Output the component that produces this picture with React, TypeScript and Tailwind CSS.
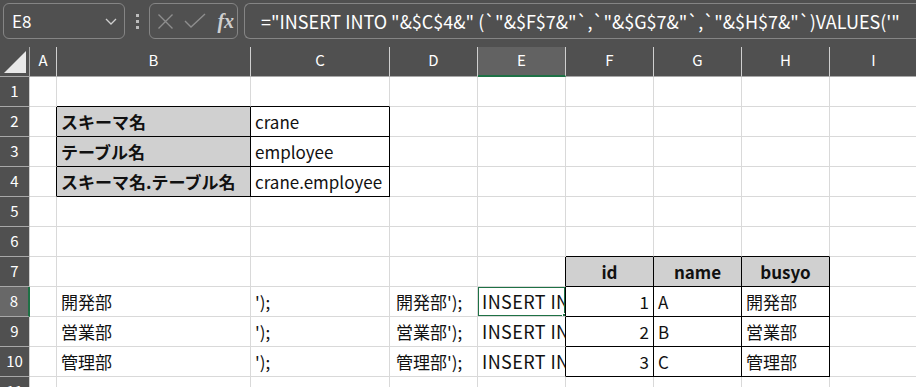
import { Fragment } from 'react';

type Cell = {
  text: string;
  bold?: boolean;
  fill?: boolean;
  align?: 'left' | 'center' | 'right';
};

const COLS = ['A', 'B', 'C', 'D', 'E', 'F', 'G', 'H', 'I'];
const ROWS = [1, 2, 3, 4, 5, 6, 7, 8, 9, 10, 11];

const cells: Record<string, Cell> = {
  B2: { text: 'スキーマ名', bold: true, fill: true },
  C2: { text: 'crane' },
  B3: { text: 'テーブル名', bold: true, fill: true },
  C3: { text: 'employee' },
  B4: { text: 'スキーマ名.テーブル名', bold: true, fill: true },
  C4: { text: 'crane.employee' },
  F7: { text: 'id', bold: true, fill: true, align: 'center' },
  G7: { text: 'name', bold: true, fill: true, align: 'center' },
  H7: { text: 'busyo', bold: true, fill: true, align: 'center' },
  B8: { text: '開発部' },
  C8: { text: "');" },
  D8: { text: "開発部');" },
  E8: { text: 'INSERT IN' },
  F8: { text: '1', align: 'right' },
  G8: { text: 'A' },
  H8: { text: '開発部' },
  B9: { text: '営業部' },
  C9: { text: "');" },
  D9: { text: "営業部');" },
  E9: { text: 'INSERT IN' },
  F9: { text: '2', align: 'right' },
  G9: { text: 'B' },
  H9: { text: '営業部' },
  B10: { text: '管理部' },
  C10: { text: "');" },
  D10: { text: "管理部');" },
  E10: { text: 'INSERT IN' },
  F10: { text: '3', align: 'right' },
  G10: { text: 'C' },
  H10: { text: '管理部' },
};

// borders drawn in black (right / bottom edge of the cell)
const rightBlack = new Set([
  'A2', 'A3', 'A4', 'B2', 'B3', 'B4', 'C2', 'C3', 'C4',
  'E7', 'E8', 'E9', 'E10', 'F7', 'F8', 'F9', 'F10', 'G7', 'G8', 'G9', 'G10', 'H7', 'H8', 'H9', 'H10',
]);
const bottomBlack = new Set([
  'B1', 'C1', 'B2', 'B3', 'B4', 'C2', 'C3', 'C4',
  'F6', 'G6', 'H6', 'F7', 'G7', 'H7', 'F8', 'G8', 'H8', 'F9', 'G9', 'H9', 'F10', 'G10', 'H10',
]);

const FORMULA = '="INSERT INTO "&$C$4&" (`"&$F$7&"`,`"&$G$7&"`,`"&$H$7&"`)VALUES(\'"';

const FormulaBar = () => (
  <div className="flex h-[47px] items-start bg-[#505050] pl-[3px] pt-[3px]">
    <div className="flex h-[36px] w-[127px] items-center justify-between rounded-[6px] border border-[#858585] pl-[8px] pr-[6px]">
      <span className="text-[17px] text-white">E8</span>
      <svg width="14" height="14" viewBox="0 0 14 14" fill="none" stroke="#cfcfcf" strokeWidth="1.3">
        <path d="M2 5l5 5 5-5" />
      </svg>
    </div>
    <div className="flex h-[36px] w-[25px] flex-col items-center justify-center gap-[3px]">
      <span className="h-[3px] w-[3px] bg-[#bdbdbd]" />
      <span className="h-[3px] w-[3px] bg-[#bdbdbd]" />
      <span className="h-[3px] w-[3px] bg-[#bdbdbd]" />
    </div>
    <div className="flex h-[36px] w-[92px] items-center rounded-[6px] border border-[#858585] pl-[7px]">
      <svg width="17" height="17" viewBox="0 0 17 17" fill="none" stroke="#8e8e8e" strokeWidth="1.4">
        <path d="M1.5 1.5l14 14M15.5 1.5l-14 14" />
      </svg>
      <svg className="ml-[10px]" width="22" height="18" viewBox="0 0 22 18" fill="none" stroke="#8e8e8e" strokeWidth="1.4">
        <path d="M1 9l6 6L21 2" />
      </svg>
      <span className="ml-[11px] font-['Liberation_Serif',serif] text-[20px] font-bold italic leading-none text-[#cfcfcf]">fx</span>
    </div>
    <div className="ml-[6px] flex h-[36px] w-[700px] items-center overflow-hidden rounded-l-[6px] border border-r-0 border-[#858585] pl-[16px]">
      <span className="whitespace-nowrap text-[18px] text-white">{FORMULA}</span>
    </div>
  </div>
);

const App = () => {
  return (
    <div className="h-[387px] w-[916px] overflow-hidden bg-white font-['Noto_Sans_CJK_JP','Noto_Sans',sans-serif]">
      <FormulaBar />
      <div className="grid grid-cols-[30px_27px_194px_139px_88px_88px_88px_88px_88px_88px]">
        {/* corner */}
        <div className="flex h-[30px] items-end justify-end border-b border-r border-[#a8a8a8] bg-[#505050] pb-[3px] pr-[3px]">
          <svg width="22" height="22" viewBox="0 0 22 22">
            <path d="M22 0V22H0Z" fill="#e8e8e8" />
          </svg>
        </div>
        {COLS.map(col => (
          <div
            key={col}
            className={
              col === 'E'
                ? 'flex h-[30px] items-center justify-center border-r border-b-2 border-r-[#cfcfcf] border-b-[#1e7145] bg-[#626262] pb-[2px] text-[15px] text-white'
                : 'flex h-[30px] items-center justify-center border-b border-r border-b-[#a8a8a8] border-r-[#cfcfcf] bg-[#505050] pb-[2px] text-[15px] text-white'
            }
          >
            {col}
          </div>
        ))}
        {ROWS.map(row => (
          <Fragment key={row}>
            <div
              className={
                row === 8
                  ? 'flex h-[30px] items-center justify-center border-b border-r-2 border-b-[#a8a8a8] border-r-[#1e7145] bg-[#686868] text-[15px] text-white'
                  : 'flex h-[30px] items-center justify-center border-b border-r border-b-[#a8a8a8] border-r-[#cfcfcf] bg-[#505050] text-[15px] text-white'
              }
            >
              {row}
            </div>
            {COLS.map(col => {
              const key = `${col}${row}`;
              const cell = cells[key];
              const rb = rightBlack.has(key);
              const bb = bottomBlack.has(key);
              return (
                <div
                  key={key}
                  className={[
                    'relative flex h-[30px] items-center overflow-hidden whitespace-nowrap border-b border-r text-[#111]',
                    col === 'E' ? 'text-[18px] tracking-[0.4px]' : 'text-[17px]',
                    rb ? 'border-r-black' : 'border-r-[#d9d9d9]',
                    bb ? 'border-b-black' : 'border-b-[#d9d9d9]',
                    cell?.fill ? 'bg-[#d0d0d0]' : 'bg-white',
                    cell?.bold ? 'font-bold' : '',
                    cell?.align === 'center' ? 'justify-center' : cell?.align === 'right' ? 'justify-end pr-[4px]' : 'pl-[4px]',
                    col === 'D' ? 'pl-[6px]' : '',
                  ].join(' ')}
                >
                  {cell?.text}
                  {key === 'E8' && (
                    <div className="pointer-events-none absolute -left-[1px] -top-[1px] h-[31px] w-[89px] border-2 border-[#1e7145]">
                      <span className="absolute -bottom-[4px] -right-[4px] h-[6px] w-[6px] border border-white bg-[#1e7145]" />
                    </div>
                  )}
                </div>
              );
            })}
          </Fragment>
        ))}
      </div>
    </div>
  );
};

export default App;
